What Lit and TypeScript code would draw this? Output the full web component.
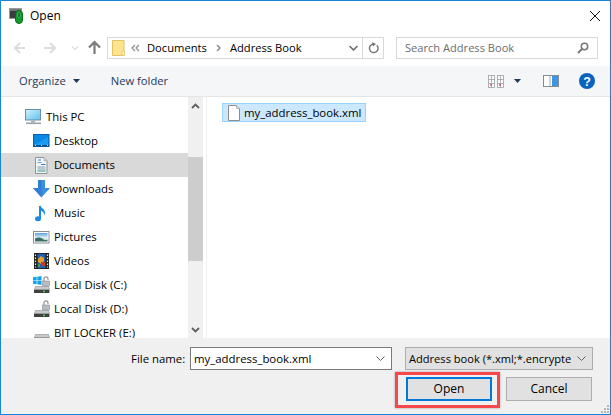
import { LitElement, html, css, svg } from "lit";
import { customElement } from "lit/decorators.js";

const ico = (w: number, h: number, body: unknown) =>
  html`<svg class="ico" width=${w} height=${h} viewBox="0 0 ${w} ${h}">${body}</svg>`;

const disk = svg`
  <path d="M2.5 10.5h13l1 3v3h-15v-3z" fill="#c9c9c9" stroke="#8f8f8f" stroke-width=".6"/>
  <rect x="1" y="13" width="15" height="4" fill="#3f3f3f"/>
  <rect x="1" y="13" width="15" height="1" fill="#9a9a9a"/>
  <rect x="10" y="14.6" width="2" height="1.6" fill="#35d04a"/>`;
const lock = svg`
  <rect x="9.5" y="5" width="7" height="5" fill="#b9bcc0" stroke="#8d9094" stroke-width=".6"/>
  <path d="M11 5V2.8a2 2 0 0 1 4 0V4" fill="none" stroke="#8d9094" stroke-width="1.2"/>`;

const icons: Record<string, unknown> = {
  pc: ico(17, 16, svg`
    <defs><linearGradient id="sc" x1="0" y1="0" x2="1" y2="1"><stop offset="0" stop-color="#d4f2fc"/><stop offset="1" stop-color="#5cc0f0"/></linearGradient></defs>
    <rect x=".5" y=".5" width="15" height="10.5" fill="url(#sc)" stroke="#6e8ca0"/>
    <rect x="6" y="11.5" width="4" height="2" fill="#a9b0b5"/>
    <rect x="1" y="13.5" width="15" height="1.6" fill="#9aa3a9"/>`),
  desktop: ico(17, 14, svg`
    <rect x=".5" y=".5" width="15.5" height="12" fill="#0a86e4" stroke="#0a5fa8"/>
    <path d="M1 11 15 3v8z" fill="#1b9bf0"/>
    <rect x="1" y="11" width="15" height="1.4" fill="#0b4f8e"/>
    <path d="M2 11.3h1M8 11.3h1M14 11.3h1" stroke="#fff" stroke-width=".9"/>`),
  docs: ico(17, 17, svg`
    <path d="M2.5.5h8.5l3 3v13h-11.500z" fill="#f2f5f7" stroke="#8e9499"/>
    <path d="M11 .8v3h3" fill="#d6dadd" stroke="#9aa0a4" stroke-width=".7"/>
    <path d="M5 3h3" stroke="#2a7fd0"/><path d="M4.500 5.500h4M4.500 10h8M4.500 12h8" stroke="#7f9cb5"/>
    <path d="M8 7.500h4.500" stroke="#2a7fd0"/><path d="M4.500 14h8" stroke="#2f9d7c"/>`),
  down: ico(17, 18, svg`
    <path d="M5 0h7v8h5l-8.500 9.500L0 8h5z" fill="#3a8fe0"/>
    <path d="M5 0h3.500v17.500L0 8h5z" fill="#2f7fd1"/>`),
  music: ico(17, 17, svg`
    <path d="M7 1v12" stroke="#1a8be6" stroke-width="2"/>
    <ellipse cx="5" cy="13.700" rx="3" ry="2.500" fill="#1a8be6"/>
    <path d="M7 0c.5 3 5 3.500 5 8 0 1-.3 1.800-.8 2.500.2-3-2-4.500-4.200-5z" fill="#1a8be6"/>`),
  pics: ico(17, 13, svg`
    <defs><linearGradient id="sky" x1="0" y1="0" x2="0" y2="1"><stop offset="0" stop-color="#5aa0d8"/><stop offset=".5" stop-color="#d5e8f2"/><stop offset="1" stop-color="#e8f0f0"/></linearGradient></defs>
    <rect x=".5" y=".5" width="15.500" height="11.500" fill="#fff" stroke="#8a8f94"/>
    <rect x="2" y="2" width="12.500" height="8.500" fill="url(#sky)"/>
    <path d="M2 7.500c3-1.500 6-1 8 .5s3 1 4.500.5v2H2z" fill="#3e6f62"/>`),
  video: ico(17, 16, svg`
    <rect x="1" y="0" width="15" height="16" fill="#222"/>
    <path d="M2.500 1.500v13M14.500 1.500v13" stroke="#e4e4e4" stroke-width="1.200" stroke-dasharray="1.500 1.500"/>
    <rect x="4.500" y="1" width="8" height="14" fill="#1f5fb5"/>
    <path d="M5 6l3-3 3 2v3l-3 3-3-2z" fill="#e8a020"/><path d="M8 9h4v4H8z" fill="#c23a2a"/>
    <rect x="5" y="11" width="2" height="3" fill="#3ea04a"/>`),
  diskC: ico(17, 18, svg`
    <path d="M0 1.300 3.700.8v3.400H0zM4.300.7 8.500 0v4.200H4.300zM0 4.800h3.700v3.400L0 7.700zM4.300 4.800h4.200V9l-4.200-.7z" fill="#12a3ee"/>
    ${lock}${disk}`),
  diskD: ico(17, 18, svg`${lock}${disk}`),
  diskE: ico(17, 18, disk),
};

const navItems = [
  ["desktop", "Desktop"],
  ["docs", "Documents"],
  ["down", "Downloads"],
  ["music", "Music"],
  ["pics", "Pictures"],
  ["video", "Videos"],
  ["diskC", "Local Disk (C:)"],
  ["diskD", "Local Disk (D:)"],
  ["diskE", "BIT LOCKER (E:)"],
];

@customElement("app-root")
export class AppRoot extends LitElement {
  static styles = css`
    :host {
      display: flex;
      flex-direction: column;
      box-sizing: border-box;
      width: 611px;
      height: 415px;
      border: 1px solid #1883d7;
      background: #fff;
      overflow: hidden;
      font: 11.4px/16px "Open Sans", sans-serif;
      color: #000;
    }
    .ico { display: block; flex: none; }
    .title { flex: none; height: 30px; display: flex; align-items: center; padding: 0 10px 0 8px; gap: 3px; }
    .title .name { flex: 1; font-size: 12px; }
    .nav { flex: none; height: 35px; display: flex; align-items: flex-start; padding-top: 6px; box-sizing: border-box; }
    .hist { width: 106px; height: 21px; flex: none; }
    .addr, .search {
      height: 22px; box-sizing: border-box; border: 1px solid #d9d9d9; display: flex; align-items: center;
    }
    .addr { width: 277px; flex: none; padding-left: 4px; font-size: 11.2px; }
    .crumb-a { margin-left: 6px; width: 16px; flex: none; }
    .crumb { flex: none; }
    .sep { margin: 0 9px; flex: none; }
    .addr .fill { flex: 1; }
    .addr .div { width: 1px; align-self: stretch; background: #d9d9d9; margin: 0 5px 0 4px; }
    .addr .end { width: 4px; flex: none; }
    .search { width: 202px; margin-left: 12px; flex: none; padding: 0 8px; color: #6d6d6d; justify-content: space-between; font-size: 11.1px; }
    .toolbar {
      flex: none; height: 31px; box-sizing: border-box; background: #f5f6f7; border-bottom: 1px solid #e5e5e5;
      display: flex; align-items: center; padding: 0 15px 0 18px; color: #1e395b; font-size: 11.2px;
    }
    .caret { margin-left: 7px; }
    .newf { margin-left: 31px; flex: 1; }
    .views { margin-right: 10px; }
    .paneicon { margin: 0 20px 0 22px; }
    .main { flex: 1; min-height: 0; display: flex; }
    .pane { width: 187px; flex: none; overflow: hidden; padding-top: 8px; box-sizing: border-box; }
    .row { height: 24px; display: flex; align-items: center; padding-left: 32px; gap: 4px; white-space: nowrap; }
    .row.top { padding-left: 24px; gap: 4px; }
    .row.sel { background: #d9d9d9; }
    .scroll { width: 15px; flex: none; background: #f0f0f0; display: flex; flex-direction: column; align-items: center; }
    .sb { height: 17px; flex: none; display: flex; align-items: center; justify-content: center; }
    .thumb { width: 100%; height: 104px; margin-top: 43px; background: #cdcdcd; flex: none; }
    .sp { flex: 1; }
    .list { flex: 1; margin-left: 3px; border-left: 1px solid #f0f0f0; padding: 6px 0 0 15px; }
    .file {
      width: 144px; height: 19px; box-sizing: border-box; background: #cce8ff; border: 1px solid #99d1ff;
      display: flex; align-items: center; padding-left: 5px; gap: 4px;
    }
    .footer { flex: none; height: 76px; background: #f0f0f0; position: relative; padding: 9px 17px 0 130px; box-sizing: border-box; }
    .line { display: flex; align-items: center; }
    .label { width: 59px; flex: none; }
    .input {
      width: 202px; height: 23px; box-sizing: border-box; border: 1px solid #7a7a7a; background: #fff; flex: none;
      display: flex; align-items: center; justify-content: space-between; padding: 0 6px 0 3px;
    }
    .select {
      width: 188px; height: 23px; box-sizing: border-box; border: 1px solid #adadad; background: #e1e1e1; flex: none;
      margin-left: 13px; display: flex; align-items: center; justify-content: space-between; padding: 0 6px 0 3px;
      white-space: nowrap; font-size: 11.1px;
    }
    .btns { display: flex; justify-content: flex-end; gap: 14px; margin-top: 7px; padding-right: 1px; }
    .btn {
      position: relative; width: 86px; height: 24px; box-sizing: border-box; border: 1px solid #adadad; background: #e1e1e1;
      display: flex; align-items: center; justify-content: center; font-size: 12px;
    }
    .btn.def { border: 2px solid #0078d7; }
    .mark {
      position: absolute; left: -13px; top: -7px; width: 105px; height: 36px; box-sizing: border-box;
      border: 3px solid #f6474d; box-shadow: 0 0 2px rgba(0,0,0,.35);
    }
    .grip { position: absolute; right: 0; bottom: 0; }
  `;

  render() {
    return html`
      <div class="title">
        ${ico(18, 17, svg`
          <rect x=".5" y=".5" width="12" height="10" fill="#3c3c3c" stroke="#9a9a9a"/>
          <rect x="1" y="1" width="11" height="2" fill="#777"/>
          <rect x="6.500" y="2.500" width="7" height="13" rx="3.500" fill="#0f9a2c" stroke="#0a6a1c"/>
          <rect x="9" y="4.500" width="2" height="5" rx="1" fill="#0a3d14" stroke="#6fd98a" stroke-width=".6"/>`)}
        <span class="name">Open</span>
        ${ico(10, 10, svg`<path d="M0 0l10 10M10 0 0 10" stroke="#111" stroke-width="1"/>`)}
      </div>

      <div class="nav">
        <svg class="ico hist" width="106" height="21" viewBox="0 0 106 21">
          <path d="M24 11.500H14M19 6.500l-5 5 5 5" transform="translate(0 -.5)" fill="none" stroke="#dcdcdc" stroke-width="2"/>
          <path d="M43 11.500h11M49 6.500l5 5-5 5" transform="translate(0 -.5)" fill="none" stroke="#dcdcdc" stroke-width="2"/>
          <path d="M71 9.500l3 3 3-3" fill="none" stroke="#dcdcdc" stroke-width="1.200"/>
          <path d="M93.500 17V5M88 10.500l5.500-5.500 5.500 5.500" fill="none" stroke="#7a7a7a" stroke-width="2.200"/>
        </svg>
        <div class="addr">
          ${ico(13, 16, svg`
            <path d="M.5.500h11.500v15H.5z" fill="#fde58f" stroke="#e4c25e"/>
            <path d="M10 11h2.500v4.500H10z" fill="#fff2bd" stroke="#e4c25e" stroke-width=".7"/>`)}
          <span class="crumb-a">${ico(9, 8, svg`<path d="M4 1 1 4l3 3M8 1 5 4l3 3" fill="none" stroke="#8a8a8a" stroke-width="1.200"/>`)}</span>
          <span class="crumb">Documents</span>
          <span class="sep">${ico(5, 8, svg`<path d="M1 1l3 3-3 3" fill="none" stroke="#8a8a8a" stroke-width="1.500"/>`)}</span>
          <span class="crumb">Address Book</span>
          <span class="fill"></span>
          ${ico(9, 6, svg`<path d="M.5 1l4 4 4-4" fill="none" stroke="#666" stroke-width="1.500"/>`)}
          <span class="div"></span>
          ${ico(11, 12, svg`
            <path d="M8.800 3.200a4.300 4.300 0 1 1-3.300-1.200" fill="none" stroke="#777" stroke-width="1.500"/>
            <path d="M4 0l4 2-3 2.500z" fill="#777"/>`)}
          <span class="end"></span>
        </div>
        <div class="search">
          <span>Search Address Book</span>
          ${ico(12, 12, svg`
            <circle cx="7.500" cy="4.500" r="3.200" fill="none" stroke="#777" stroke-width="1.500"/>
            <path d="M5 7 1 11" stroke="#777" stroke-width="2"/>`)}
        </div>
      </div>

      <div class="toolbar">
        <span>Organize</span>
        <span class="caret">${ico(7, 4, svg`<path d="M0 0h7L3.500 4z" fill="#1e395b"/>`)}</span>
        <span class="newf">New folder</span>
        <span class="views">${ico(16, 13, svg`
          <g fill="#fff" stroke="#9aa0a5" stroke-width=".8"><rect x=".5" y=".5" width="6" height="12"/><rect x="9.500" y=".5" width="6" height="12"/></g>
          <path d="M.5 4.500h6M.5 8.500h6M9.500 4.500h6M9.500 8.500h6M3.500 .5v12M12.500 .5v12" stroke="#9aa0a5" stroke-width=".8"/>
          <path d="M2 10h2M11 10h2" stroke="#d9534f" stroke-width="1.500"/>`)}</span>
        <span>${ico(7, 4, svg`<path d="M0 0h7L3.500 4z" fill="#1e395b"/>`)}</span>
        <span class="paneicon">${ico(16, 12, svg`
          <rect x=".5" y=".5" width="15" height="11" fill="#fff" stroke="#8a8a8a"/>
          <rect x="9" y="1" width="6" height="10" fill="#3c96e6"/>
          <path d="M7 1v10" stroke="#a8a8a8"/>`)}</span>
        ${ico(16, 16, svg`
          <circle cx="8" cy="8" r="8" fill="#0b63c0"/>
          <text x="8" y="12.500" text-anchor="middle" font-family="Liberation Sans, sans-serif" font-weight="700" font-size="12.500" fill="#fff">?</text>`)}
      </div>

      <div class="main">
        <div class="pane">
          <div class="row top">${icons.pc}<span>This PC</span></div>
          ${navItems.map(
            ([k, t]) => html`<div class="row ${t === "Documents" ? "sel" : ""}">${icons[k]}<span>${t}</span></div>`
          )}
        </div>
        <div class="scroll">
          <div class="sb">${ico(9, 6, svg`<path d="M1 5l3.500-3.500L8 5" fill="none" stroke="#606060" stroke-width="1.800"/>`)}</div>
          <div class="thumb"></div>
          <div class="sp"></div>
          <div class="sb">${ico(9, 6, svg`<path d="M1 1l3.500 3.500L8 1" fill="none" stroke="#606060" stroke-width="1.800"/>`)}</div>
        </div>
        <div class="list">
          <div class="file">
            ${ico(12, 16, svg`
              <path d="M.5.500h8l3 3v12H.5z" fill="#fff" stroke="#8e8e8e"/>
              <path d="M8.500 .5v3h3" fill="#e5e5e5" stroke="#a5a5a5" stroke-width=".8"/>`)}
            <span>my_address_book.xml</span>
          </div>
        </div>
      </div>

      <div class="footer">
        <div class="line">
          <span class="label">File name:</span>
          <div class="input">
            <span>my_address_book.xml</span>
            ${ico(9, 5, svg`<path d="M.5.500l4 4 4-4" fill="none" stroke="#606060"/>`)}
          </div>
          <div class="select">
            <span>Address book (*.xml;*.encrypte</span>
            ${ico(9, 5, svg`<path d="M.5.500l4 4 4-4" fill="none" stroke="#606060"/>`)}
          </div>
        </div>
        <div class="btns">
          <div class="btn def">Open<div class="mark"></div></div>
          <div class="btn">Cancel</div>
        </div>
        <span class="grip">${ico(10, 10, svg`
          <path d="M7 1h2v2H7zM4 4h2v2H4zM7 4h2v2H7zM1 7h2v2H1zM4 7h2v2H4zM7 7h2v2H7z" fill="#b5b5b5"/>`)}</span>
      </div>
    `;
  }
}
